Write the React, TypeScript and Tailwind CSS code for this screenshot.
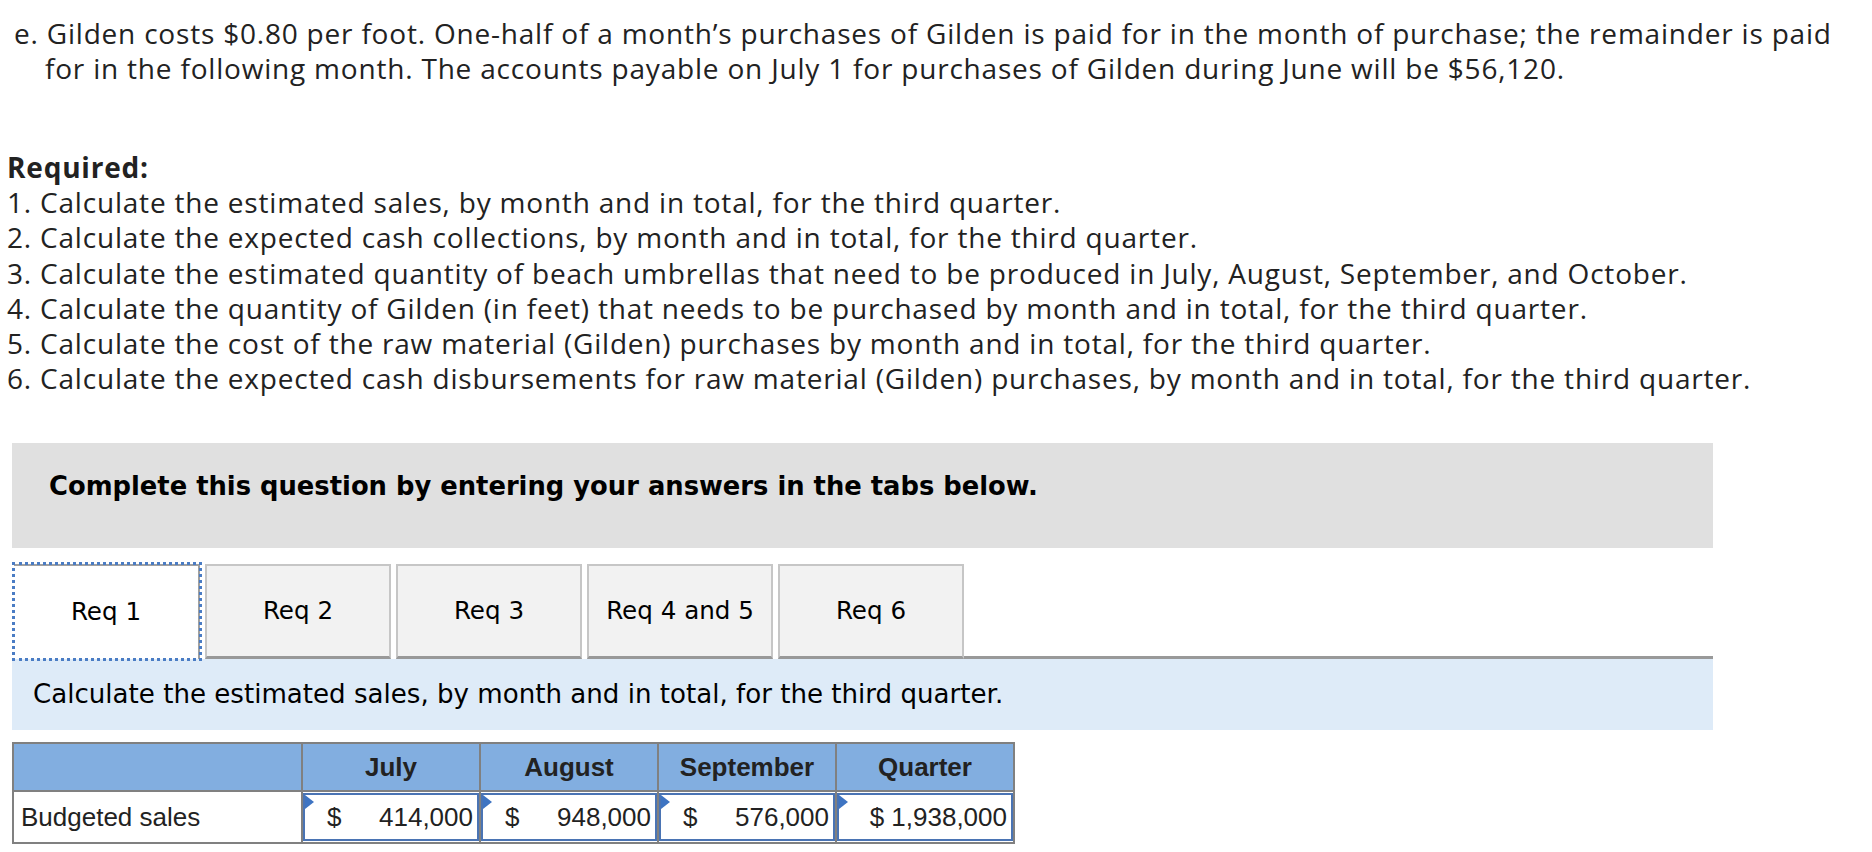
import React from "react";

const items = [
  "1. Calculate the estimated sales, by month and in total, for the third quarter.",
  "2. Calculate the expected cash collections, by month and in total, for the third quarter.",
  "3. Calculate the estimated quantity of beach umbrellas that need to be produced in July, August, September, and October.",
  "4. Calculate the quantity of Gilden (in feet) that needs to be purchased by month and in total, for the third quarter.",
  "5. Calculate the cost of the raw material (Gilden) purchases by month and in total, for the third quarter.",
  "6. Calculate the expected cash disbursements for raw material (Gilden) purchases, by month and in total, for the third quarter.",
];

const tabs = ["Req 1", "Req 2", "Req 3", "Req 4 and 5", "Req 6"];

function InputCell({ value }: { value: string }) {
  return (
    <td className="border-2 border-[#808080] p-0 h-[52px]">
      <div className="relative h-[48px] border-2 border-[#4a74b4] bg-white flex items-center justify-between pl-[22px] pr-[4px] text-[26px] text-[#222]">
        <span className="absolute left-0 top-0 w-0 h-0 border-t-[7px] border-b-[7px] border-l-[9px] border-t-transparent border-b-transparent border-l-[#3e74c2]" />
        <span>$</span>
        <span>{value}</span>
      </div>
    </td>
  );
}

export default function App() {
  return (
    <div className="w-[1872px] h-[852px] bg-white text-[#222] overflow-hidden font-['Open_Sans',sans-serif]">
      <div className="pt-[16px] tracking-[0.8px]">
        <p className="pl-[45px] -indent-[31px] text-[28px] leading-[35px] w-[1852px]">
          e. Gilden costs $0.80 per foot. One-half of a month’s purchases of Gilden is paid for in the month of purchase; the remainder is paid for in the following month. The accounts payable on July 1 for purchases of Gilden during June will be $56,120.
        </p>
        <div className="mt-[64px] pl-[7px] text-[28px] leading-[35.2px]">
          <p className="font-bold">Required:</p>
          {items.map((t) => (
            <p key={t}>{t}</p>
          ))}
        </div>
      </div>

      <div className="mx-[12px] w-[1701px] mt-[47px]">
        <div className="h-[105px] bg-[#e0e0e0] pl-[37px] pt-[28px]">
          <p className="font-['DejaVu_Sans',sans-serif] font-bold text-[25.8px] leading-[30px] text-black">
            Complete this question by entering your answers in the tabs below.
          </p>
        </div>

        <div className="mt-[16px] flex items-end">
          <div className="flex gap-[5px] pl-[2px]">
            {tabs.map((t, i) => (
              <div
                key={t}
                className={
                  i === 0
                    ? "relative w-[186px] h-[95px] bg-white border-t-2 border-r-2 border-[#a0a0a0] outline-[3px] outline-dotted outline-[#4a7cc4] -outline-offset-[1px] flex items-center justify-center font-['DejaVu_Sans',sans-serif] text-[24.6px] text-black"
                    : "w-[186px] h-[95px] bg-[#f2f2f2] border-2 border-[#c6c6c6] border-b-[3px] border-b-[#999] flex items-center justify-center font-['DejaVu_Sans',sans-serif] text-[24.6px] text-black"
                }
              >
                {t}
              </div>
            ))}
          </div>
          <div className="flex-1 h-[3px] bg-[#999]" />
        </div>

        <div className="h-[71px] bg-[#deebf8] pl-[21px] flex items-center">
          <p className="font-['DejaVu_Sans',sans-serif] text-[26.1px] text-black">
            Calculate the estimated sales, by month and in total, for the third quarter.
          </p>
        </div>

        <table className="mt-[12px] border-collapse font-['Liberation_Sans',sans-serif] text-[#222]">
          <thead>
            <tr className="bg-[#82aee0] h-[48px]">
              <th className="w-[289px] border-2 border-[#808080]" />
              {["July", "August", "September", "Quarter"].map((h) => (
                <th key={h} className="w-[178px] border-2 border-[#808080] text-[26px] font-bold text-center">
                  {h}
                </th>
              ))}
            </tr>
          </thead>
          <tbody>
            <tr>
              <td className="border-2 border-[#808080] text-[26px] pl-[7px] text-left">Budgeted sales</td>
              <InputCell value="414,000" />
              <InputCell value="948,000" />
              <InputCell value="576,000" />
              <td className="border-2 border-[#808080] p-0 h-[52px]">
                <div className="relative h-[48px] border-2 border-[#4a74b4] bg-white flex items-center justify-end pr-[4px] text-[26px] text-[#222]">
                  <span className="absolute left-0 top-0 w-0 h-0 border-t-[7px] border-b-[7px] border-l-[9px] border-t-transparent border-b-transparent border-l-[#3e74c2]" />
                  <span>$ 1,938,000</span>
                </div>
              </td>
            </tr>
          </tbody>
        </table>
      </div>
    </div>
  );
}
